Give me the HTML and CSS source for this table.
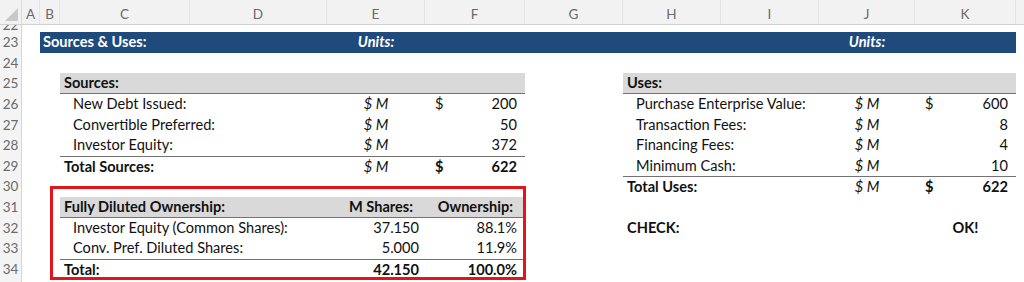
FILE: index.html
```html
<!DOCTYPE html>
<html>
<head>
<meta charset="utf-8">
<link rel="stylesheet" href="styles.css">
</head>
<body>
<div class="sheet">
  <div class="colhdr">
    <div class="corner"><span class="tri"></span></div>
    <div class="ch">A</div><div class="ch">B</div><div class="ch">C</div><div class="ch">D</div>
    <div class="ch">E</div><div class="ch">F</div><div class="ch">G</div><div class="ch">H</div>
    <div class="ch">I</div><div class="ch">J</div><div class="ch">K</div><div class="ch last"></div>
  </div>

  <div class="row r22"><div class="rh"><span>22</span></div></div>

  <div class="row">
    <div class="rh">23</div>
    <div class="c blue bold span-bd">Sources &amp; Uses:</div>
    <div class="c blue bold ital center colE">Units:</div>
    <div class="c blue span-fi"></div>
    <div class="c blue bold ital center colJ">Units:</div>
    <div class="c blue colK"></div>
  </div>

  <div class="row"><div class="rh">24</div></div>

  <div class="row">
    <div class="rh">25</div>
    <div class="c hdr bold span-cf">Sources:</div>
    <div class="c hdr bold span-hk">Uses:</div>
  </div>

  <div class="row">
    <div class="rh">26</div>
    <div class="c ind span-cd">New Debt Issued:</div>
    <div class="c ital center colE">$ M</div>
    <div class="c acc colF"><span>$</span><span>200</span></div>
    <div class="c ind span-hi">Purchase Enterprise Value:</div>
    <div class="c ital center colJ">$ M</div>
    <div class="c acc colK"><span>$</span><span>600</span></div>
  </div>

  <div class="row">
    <div class="rh">27</div>
    <div class="c ind span-cd">Convertible Preferred:</div>
    <div class="c ital center colE">$ M</div>
    <div class="c acc colF"><span></span><span>50</span></div>
    <div class="c ind span-hi">Transaction Fees:</div>
    <div class="c ital center colJ">$ M</div>
    <div class="c acc colK"><span></span><span>8</span></div>
  </div>

  <div class="row">
    <div class="rh">28</div>
    <div class="c ind span-cd">Investor Equity:</div>
    <div class="c ital center colE">$ M</div>
    <div class="c acc colF"><span></span><span>372</span></div>
    <div class="c ind span-hi">Financing Fees:</div>
    <div class="c ital center colJ">$ M</div>
    <div class="c acc colK"><span></span><span>4</span></div>
  </div>

  <div class="row">
    <div class="rh">29</div>
    <div class="c tot bold span-cd">Total Sources:</div>
    <div class="c tot ital center colE">$ M</div>
    <div class="c tot acc bold colF"><span>$</span><span>622</span></div>
    <div class="c ind span-hi">Minimum Cash:</div>
    <div class="c ital center colJ">$ M</div>
    <div class="c acc colK"><span></span><span>10</span></div>
  </div>

  <div class="row">
    <div class="rh">30</div>
    <div class="c tot bold span-hi">Total Uses:</div>
    <div class="c tot ital center colJ">$ M</div>
    <div class="c tot acc bold colK"><span>$</span><span>622</span></div>
  </div>

  <div class="row">
    <div class="rh">31</div>
    <div class="c hdr bold span-cd">Fully Diluted Ownership:</div>
    <div class="c hdr bold right colE">M Shares:</div>
    <div class="c hdr bold right colF">Ownership:</div>
  </div>

  <div class="row">
    <div class="rh">32</div>
    <div class="c ind span-cd">Investor Equity (Common Shares):</div>
    <div class="c num colE">37.150</div>
    <div class="c pct colF">88.1%</div>
    <div class="c bold colH">CHECK:</div>
    <div class="c bold center colK">OK!</div>
  </div>

  <div class="row">
    <div class="rh">33</div>
    <div class="c ind span-cd">Conv. Pref. Diluted Shares:</div>
    <div class="c num colE">5.000</div>
    <div class="c pct colF">11.9%</div>
  </div>

  <div class="row">
    <div class="rh">34</div>
    <div class="c tot bold span-cd">Total:</div>
    <div class="c tot bold num colE">42.150</div>
    <div class="c tot bold pct colF">100.0%</div>
  </div>

  <div class="row r35"><div class="rh"></div></div>

  <div class="highlight"></div>
</div>
</body>
</html>
```

FILE: styles.css
```css
html, body {
  margin: 0;
  padding: 0;
  background: #ffffff;
  overflow: hidden;
}

.sheet {
  position: relative;
  width: 1024px;
  height: 282px;
  overflow: hidden;
  font-family: "Lato", "Liberation Sans", sans-serif;
  font-size: 14.6px;
  color: #111111;
}

.colhdr {
  display: grid;
  grid-template-columns: 22px 18px 20px 130px 137px 98px 100px 98px 98px 98px 96px 101px 8px;
  height: 25px;
  background: #f2f2f2;
  border-bottom: 1px solid #d2d2d2;
  box-sizing: border-box;
}

.corner {
  position: relative;
  border-right: 1px solid #dcdcdc;
}

.tri {
  position: absolute;
  right: 3px;
  bottom: 3px;
  width: 0;
  height: 0;
  border-left: 13px solid transparent;
  border-bottom: 13px solid #c9c9c9;
}

.ch {
  display: flex;
  align-items: center;
  justify-content: center;
  font-size: 13.5px;
  color: #6a6a6a;
  border-right: 1px solid #e4e4e4;
  padding-top: 3px;
  box-sizing: border-box;
}

.ch.last {
  border-right: none;
}

.row {
  display: grid;
  grid-template-columns: 22px 18px 20px 130px 137px 98px 100px 98px 98px 98px 96px 101px 8px;
  height: 20.64px;
  line-height: 20.64px;
}

.r22 {
  height: 7px;
  overflow: hidden;
}

.r22 .rh {
  align-items: flex-start;
  height: 7px;
  overflow: hidden;
}

.r22 .rh span {
  display: block;
  line-height: 0;
  height: 0;
}

.rh {
  grid-column: 1;
  background: #f4f4f4;
  border-right: 1px solid #d6d6d6;
  color: #6a6a6a;
  font-size: 13.5px;
  display: flex;
  align-items: center;
  justify-content: center;
  box-sizing: border-box;
}

.c {
  white-space: nowrap;
  overflow: hidden;
  padding: 0 4px;
  box-sizing: border-box;
}

.span-bd { grid-column: 3 / 6; padding-left: 3px; }
.span-cf { grid-column: 4 / 8; }
.span-cd { grid-column: 4 / 6; }
.span-hk { grid-column: 9 / 13; }
.span-hi { grid-column: 9 / 11; }
.span-fi { grid-column: 7 / 11; }
.colE { grid-column: 6; }
.colF { grid-column: 7; }
.colH { grid-column: 9; }
.colJ { grid-column: 11; }
.colK { grid-column: 12; }

.blue {
  background: #1f4a7c;
  color: #ffffff;
}

.hdr {
  background: #d9d9d9;
  border-bottom: 1px solid #737373;
}

.tot {
  border-top: 1px solid #737373;
}

.bold { font-weight: 700; }
.ital { font-style: italic; }
.center { text-align: center; }
.right { text-align: right; padding-right: 12px; }

.ind { padding-left: 13px; }

.acc {
  display: flex;
  justify-content: space-between;
  padding-left: 10px;
  padding-right: 8px;
}

.num {
  text-align: right;
  padding-right: 6px;
}

.pct {
  text-align: right;
  padding-right: 8px;
}

.highlight {
  position: absolute;
  left: 50px;
  top: 186px;
  width: 476px;
  height: 94px;
  border: 3px solid #e3151c;
  box-sizing: border-box;
}
```
